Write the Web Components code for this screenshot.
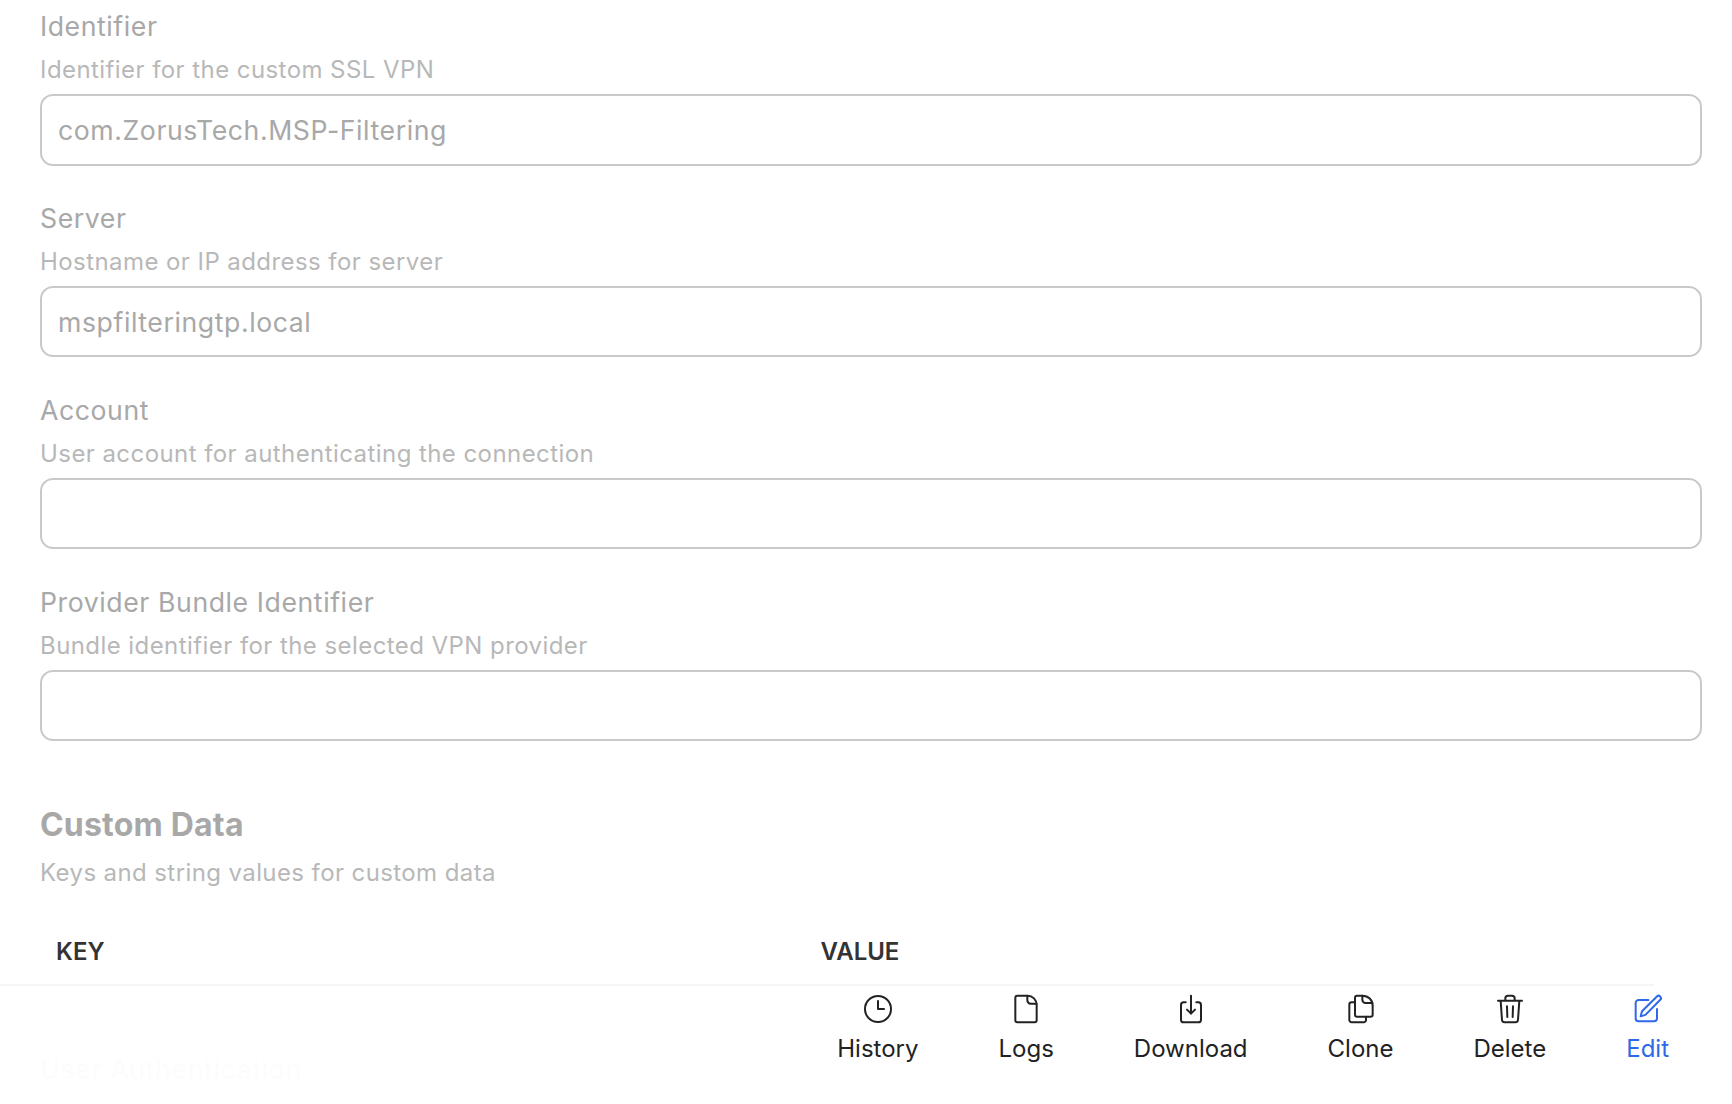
<!DOCTYPE html>
<html>
<head>
<meta charset="utf-8">
<title>Custom SSL VPN</title>
<style>
  html, body { margin: 0; height: 100%; background: #fff; overflow: hidden; }
  body { font-family: Inter, "Liberation Sans", sans-serif; position: relative; }
  main { padding: 10px 30px 0 40px; }
</style>
</head>
<body>
<main>
  <form-field label="Identifier" hint="Identifier for the custom SSL VPN" value="com.ZorusTech.MSP-Filtering"></form-field>
  <form-field label="Server" hint="Hostname or IP address for server" value="mspfilteringtp.local"></form-field>
  <form-field label="Account" hint="User account for authenticating the connection"></form-field>
  <form-field label="Provider Bundle Identifier" hint="Bundle identifier for the selected VPN provider"></form-field>
  <section-head title="Custom Data" hint="Keys and string values for custom data"></section-head>
  <kv-header></kv-header>
  <faint-head>User Authentication</faint-head>
</main>
<action-bar>
  <action-item label="History" icon="history"></action-item>
  <action-item label="Logs" icon="logs"></action-item>
  <action-item label="Download" icon="download"></action-item>
  <action-item label="Clone" icon="clone"></action-item>
  <action-item label="Delete" icon="delete"></action-item>
  <action-item label="Edit" icon="edit" accent></action-item>
</action-bar>

<script>
class FormField extends HTMLElement {
  constructor() {
    super();
    this.attachShadow({ mode: "open" });
  }
  connectedCallback() {
    this.shadowRoot.innerHTML = `
    <style>
      :host { display: block; margin-bottom: 36.4px; }
      .label { font-size: 26.67px; line-height: 32px; letter-spacing: .57px; color: #a8a8a8; }
      .hint { font-size: 24px; line-height: 28px; letter-spacing: .43px; color: #b8b8b8; margin: 14px 0 10px; }
      .box {
        height: 71.5px; box-sizing: border-box; border: 2px solid #c9c9c9; border-radius: 13px;
        padding: 0 16px; display: flex; align-items: center;
        font-size: 26.67px; letter-spacing: .57px; color: #a8a8a8;
      }
    </style>
    <div class="label">${this.getAttribute("label")}</div>
    <div class="hint">${this.getAttribute("hint")}</div>
    <div class="box">${this.getAttribute("value") || ""}</div>
  `;
  }
}
customElements.define("form-field", FormField);

class SectionHead extends HTMLElement {
  constructor() {
    super();
    this.attachShadow({ mode: "open" });
  }
  connectedCallback() {
    this.shadowRoot.innerHTML = `
    <style>
      :host { display: block; padding-top: 27.7px; }
      h2 { margin: 0; font-size: 32px; line-height: 40px; font-weight: 700; letter-spacing: .2px; color: #a8a8a8; }
      p { margin: 14px 0 0; font-size: 24px; line-height: 28px; letter-spacing: .4px; color: #b8b8b8; }
    </style>
    <h2>${this.getAttribute("title")}</h2>
    <p>${this.getAttribute("hint")}</p>
  `;
  }
}
customElements.define("section-head", SectionHead);

class KvHeader extends HTMLElement {
  constructor() {
    super();
    this.attachShadow({ mode: "open" });
  }
  connectedCallback() {
    this.shadowRoot.innerHTML = `
    <style>
      :host {
        display: grid; grid-template-columns: 46% 1fr; margin-top: 51.2px;
        font-size: 24px; line-height: 28px; font-weight: 600; color: #333;
      }
      div { padding-left: 16px; }
    </style>
    <div>KEY</div><div>VALUE</div>
  `;
  }
}
customElements.define("kv-header", KvHeader);

class FaintHead extends HTMLElement {
  constructor() {
    super();
    this.attachShadow({ mode: "open" });
  }
  connectedCallback() {
    this.shadowRoot.innerHTML = `
    <style>
      :host { display: block; margin-top: 87px; font-size: 26.67px; line-height: 32px; letter-spacing: .65px; color: #a8a8a8; }
    </style>
    <slot></slot>
  `;
  }
}
customElements.define("faint-head", FaintHead);

const ICONS = {
  history: `<circle cx="12" cy="12" r="9.75"/><path d="M12 6v6h4.5"/>`,
  logs: `<path d="M13 2H5.5A1.5 1.5 0 0 0 4 3.5v17A1.5 1.5 0 0 0 5.5 22h13a1.5 1.5 0 0 0 1.5-1.5V9c0-4-3-7-7-7z"/><path d="M13 2v3.5A2.5 2.5 0 0 0 15.5 8H20"/>`,
  download: `<path d="M8 7H6.5a2 2 0 0 0-2 2v11a2 2 0 0 0 2 2h11a2 2 0 0 0 2-2V9a2 2 0 0 0-2-2H16"/><path d="M12 2v13.5M9 12.5l3 3 3-3"/>`,
  clone: `<path d="M9 2h4c4.500 0 7.750 3.250 7.750 7.500v6.750a1.500 1.500 0 0 1-1.500 1.500H9a1.500 1.500 0 0 1-1.500-1.500V3.500A1.500 1.500 0 0 1 9 2z"/><path d="M13 2v3a2.500 2.500 0 0 0 2.500 2.500h5"/><path d="M7.500 7H5a1.750 1.750 0 0 0-1.750 1.750v11.500A1.750 1.750 0 0 0 5 22h9a1.750 1.750 0 0 0 1.750-1.750v-2.500"/>`,
  delete: `<path d="M3 5.750h18M8.500 5.750V4a2 2 0 0 1 2-2h3a2 2 0 0 1 2 2v1.750M5 5.750l1 14.500A2 2 0 0 0 8 22h8a2 2 0 0 0 2-1.750l1-14.500M9.750 10l.25 8M14.250 10l-.25 8"/>`,
  edit: `<path d="M12.250 5.250H5a2.250 2.250 0 0 0-2.250 2.250V19A2.250 2.250 0 0 0 5 21.250h11.500A2.250 2.250 0 0 0 18.750 19v-7"/><path d="M6.500 17.500l1-3.800L18.700 2.600a1.700 1.700 0 0 1 2.400 0l.1.100a1.700 1.700 0 0 1 0 2.400L10.100 16.400z"/>`
};

class ActionItem extends HTMLElement {
  constructor() {
    super();
    this.attachShadow({ mode: "open" });
  }
  connectedCallback() {
    this.shadowRoot.innerHTML = `
    <style>
      :host {
        display: flex; flex-direction: column; align-items: center; gap: 8px;
        font-size: 24px; line-height: 32px; color: #222;
      }
      :host([accent]) { color: #2f68e8; }
      svg { width: 32px; height: 32px; fill: none; stroke: currentColor; stroke-width: 1.5; stroke-linecap: round; stroke-linejoin: round; display: block; }
    </style>
    <svg viewBox="0 0 24 24">${ICONS[this.getAttribute("icon")]}</svg>
    <span>${this.getAttribute("label")}</span>
  `;
  }
}
customElements.define("action-item", ActionItem);

class ActionBar extends HTMLElement {
  constructor() {
    super();
    this.attachShadow({ mode: "open" });
  }
  connectedCallback() {
    this.shadowRoot.innerHTML = `
    <style>
      :host {
        position: absolute; left: 0; right: 0; bottom: 0; height: 120px; box-sizing: border-box;
        display: block; background: rgba(255,255,255,.96);
      }
      .rule { height: 1.5px; margin-right: 78px; background: #f5f5f5; }
      .row { display: flex; justify-content: flex-end; gap: 80px; padding: 7px 63px 0 0; }
    </style>
    <div class="rule"></div>
    <div class="row"><slot></slot></div>
  `;
  }
}
customElements.define("action-bar", ActionBar);
</script>
</body>
</html>
